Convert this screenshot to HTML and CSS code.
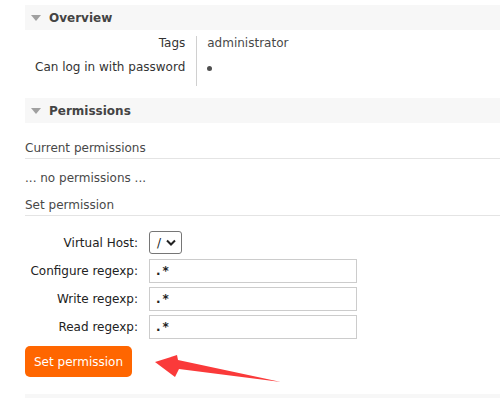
FILE: index.html
```html
<!DOCTYPE html>
<html lang="en">
<head>
  <meta charset="UTF-8">
  <title>User: admin</title>
  <link rel="stylesheet" href="styles.css">
</head>
<body>
  <div class="page">

    <!-- OVERVIEW -->
    <div class="section">
      <h2 class="section-head"><span class="caret"></span>Overview</h2>
      <table class="facts">
        <tr>
          <th>Tags</th>
          <td>administrator</td>
        </tr>
        <tr>
          <th>Can log in with password</th>
          <td><span class="dot"></span></td>
        </tr>
      </table>
    </div>

    <!-- PERMISSIONS -->
    <div class="section">
      <h2 class="section-head"><span class="caret"></span>Permissions</h2>
      <h3>Current permissions</h3>
      <p class="empty">... no permissions ...</p>
      <h3 class="set-title">Set permission</h3>

      <form class="perm-form">
        <label>Virtual Host:</label>
        <div class="fake-select">
          <span>/</span>
          <svg width="10" height="7" viewBox="0 0 10 7"><path d="M1 1.5 L5 5.5 L9 1.5" fill="none" stroke="#222" stroke-width="2"/></svg>
        </div>
        <label>Configure regexp:</label>
        <input type="text" value=".*">
        <label>Write regexp:</label>
        <input type="text" value=".*">
        <label>Read regexp:</label>
        <input type="text" value=".*">
      </form>

      <button type="button" class="submit-button">Set permission</button>
    </div>

    <div class="section-head stub"></div>

    <!-- annotation arrow -->
    <svg class="arrow" width="500" height="398" viewBox="0 0 500 398">
      <polygon points="155,362 177,355 178,360 281,382 179,369 175,377" fill="#fa3a3a"/>
    </svg>
  </div>
</body>
</html>
```

FILE: styles.css
```css
* {
  margin: 0;
  padding: 0;
  box-sizing: border-box;
}

body {
  font-family: 'DejaVu Sans', Verdana, sans-serif;
  font-size: 12px;
  color: #484848;
  background-color: white;
  overflow: hidden;
}

.page {
  position: relative;
  padding: 5px 0 0 25px;
  height: 398px;
  overflow: hidden;
}

.section-head {
  display: flex;
  align-items: center;
  gap: 8px;
  height: 25px;
  padding-left: 6px;
  background-color: #f7f7f7;
  font-size: 12px;
  font-weight: bold;
  color: #444;
}

.caret {
  width: 0;
  height: 0;
  border-left: 5.5px solid transparent;
  border-right: 5.5px solid transparent;
  border-top: 6px solid #a0a0a0;
}

.facts {
  margin-top: 6px;
  border-collapse: collapse;
  line-height: 14px;
}

.facts th {
  text-align: right;
  font-weight: normal;
  color: #333;
  padding: 0 11px 10px 10px;
  vertical-align: top;
}

.facts td {
  border-left: 1px solid #d0d0d0;
  padding: 0 10px 10px 10px;
  vertical-align: top;
}

.facts tr:last-child th,
.facts tr:last-child td {
  padding-bottom: 12px;
}

.dot {
  display: inline-block;
  width: 5px;
  height: 5px;
  margin-top: 6px;
  border-radius: 50%;
  background-color: #505050;
}

.section + .section .section-head {
  margin-top: 12px;
}

h3 {
  margin-top: 18px;
  padding-bottom: 3px;
  border-bottom: 1px solid #e4e4e4;
  font-size: 12px;
  font-weight: normal;
  line-height: 14px;
}

.empty {
  margin-top: 12px;
  line-height: 14px;
}

.set-title {
  margin-top: 13px;
}

.perm-form {
  display: grid;
  grid-template-columns: 113px 208px;
  grid-auto-rows: 24px;
  column-gap: 11px;
  row-gap: 4px;
  align-items: center;
  margin-top: 15px;
  color: #222;
}

.perm-form label {
  text-align: right;
}

.fake-select {
  display: flex;
  align-items: center;
  justify-content: space-between;
  width: 33px;
  height: 23px;
  padding: 0 5px 0 7px;
  border: 1px solid #767676;
  border-radius: 3px;
  color: #222;
  align-self: start;
}

.perm-form input[type="text"] {
  width: 208px;
  height: 24px;
  padding: 0 6px;
  border: 1px solid #cccccc;
  font-family: 'DejaVu Sans', Verdana, sans-serif;
  font-size: 12px;
  letter-spacing: 2px;
  font-weight: bold;
  color: #222;
  outline: none;
}

.submit-button {
  display: block;
  margin-top: 7px;
  height: 31px;
  padding: 0 9px;
  background-color: #ff6600;
  color: white;
  border: none;
  border-radius: 5px;
  font-family: 'DejaVu Sans', Verdana, sans-serif;
  font-size: 12px;
}

.stub {
  margin-top: 17px;
}

.arrow {
  position: absolute;
  left: 0;
  top: 0;
  pointer-events: none;
}
```
